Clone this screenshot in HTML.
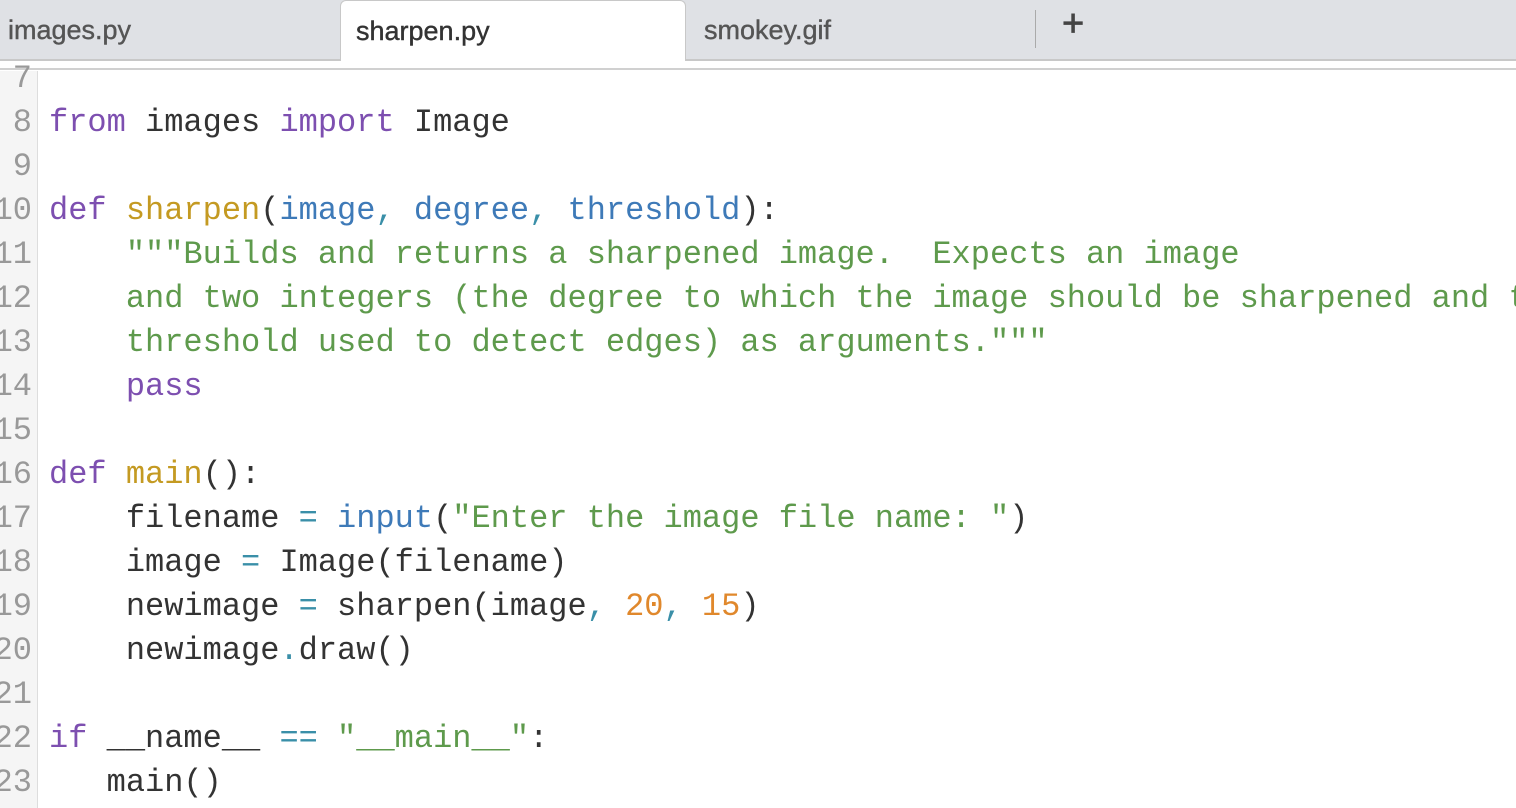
<!DOCTYPE html>
<html><head><style>
*{margin:0;padding:0;box-sizing:border-box}
body{width:1516px;height:808px;overflow:hidden;background:#fff;position:relative;font-family:"Liberation Sans",sans-serif}
#tabs{position:absolute;left:0;top:0;width:1516px;height:61px;background:#dfe1e5;border-bottom:2px solid #c8c8c8}
.tab{position:absolute;top:0;height:60px;font-size:27px;color:#555;line-height:60px;-webkit-text-stroke:0.4px currentColor}
#t1{left:8px}
#t2{left:340px;width:346px;background:#fff;border:1px solid #c8c8c8;border-bottom:none;border-radius:6px 6px 0 0;padding-left:15px;color:#333;height:61px}
#t3{left:704px}
#sep{position:absolute;left:1035px;top:10px;width:1px;height:38px;background:#aaa}
#plus{position:absolute;left:1062px;top:4px;font-size:38px;color:#444;line-height:40px;-webkit-text-stroke:0.8px #444}
#strip{position:absolute;left:0;top:61px;width:1516px;height:9px;background:#fff;border-bottom:2px solid #d0d0d0}
#gut{position:absolute;left:0;top:71px;width:38px;height:737px;background:#f5f5f5;border-right:1px solid #ddd}
.ln{position:absolute;right:1484px;font-family:"Liberation Mono",monospace;font-size:32px;color:#999;line-height:44px;white-space:pre;text-align:right}
.cl{position:absolute;left:49px;font-family:"Liberation Mono",monospace;font-size:32px;color:#333;line-height:44px;white-space:pre}
.k{color:#7d4fb0}.f{color:#c49a22}.p{color:#3e7ab8}.s{color:#5e9a4c}.n{color:#e0882c}.o{color:#3a8fa8}
</style></head><body>
<div id="tabs">
<div class="tab" id="t1">images.py</div>
<div class="tab" id="t2">sharpen.py</div>
<div class="tab" id="t3">smokey.gif</div>
<div id="sep"></div><div id="plus">+</div>
</div>
<div id="strip"></div>
<div id="gut"></div>
<div class="ln" style="top:57px">7</div>
<div class="ln" style="top:101px">8</div>
<div class="ln" style="top:145px">9</div>
<div class="ln" style="top:189px">10</div>
<div class="ln" style="top:233px">11</div>
<div class="ln" style="top:277px">12</div>
<div class="ln" style="top:321px">13</div>
<div class="ln" style="top:365px">14</div>
<div class="ln" style="top:409px">15</div>
<div class="ln" style="top:453px">16</div>
<div class="ln" style="top:497px">17</div>
<div class="ln" style="top:541px">18</div>
<div class="ln" style="top:585px">19</div>
<div class="ln" style="top:629px">20</div>
<div class="ln" style="top:673px">21</div>
<div class="ln" style="top:717px">22</div>
<div class="ln" style="top:761px">23</div>
<div class="cl" style="top:101px"><span class="k">from</span> images <span class="k">import</span> Image</div>
<div class="cl" style="top:189px"><span class="k">def</span> <span class="f">sharpen</span>(<span class="p">image</span><span class="o">,</span> <span class="p">degree</span><span class="o">,</span> <span class="p">threshold</span>):</div>
<div class="cl s" style="top:233px">    """Builds and returns a sharpened image.  Expects an image</div>
<div class="cl s" style="top:277px">    and two integers (the degree to which the image should be sharpened and the</div>
<div class="cl s" style="top:321px">    threshold used to detect edges) as arguments."""</div>
<div class="cl" style="top:365px">    <span class="k">pass</span></div>
<div class="cl" style="top:453px"><span class="k">def</span> <span class="f">main</span>():</div>
<div class="cl" style="top:497px">    filename <span class="o">=</span> <span class="p">input</span>(<span class="s">"Enter the image file name: "</span>)</div>
<div class="cl" style="top:541px">    image <span class="o">=</span> Image(filename)</div>
<div class="cl" style="top:585px">    newimage <span class="o">=</span> sharpen(image<span class="o">,</span> <span class="n">20</span><span class="o">,</span> <span class="n">15</span>)</div>
<div class="cl" style="top:629px">    newimage<span class="o">.</span>draw()</div>
<div class="cl" style="top:717px"><span class="k">if</span> __name__ <span class="o">==</span> <span class="s">"__main__"</span>:</div>
<div class="cl" style="top:761px">   main()</div>
</body></html>
